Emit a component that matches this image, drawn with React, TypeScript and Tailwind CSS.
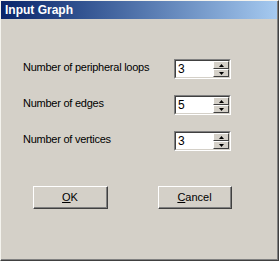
import React from "react";

const font = { fontFamily: '"Liberation Sans", Arial, sans-serif' };

function SpinBtn({ up }: { up: boolean }) {
  return (
    <div className="flex h-[8px] w-[16px] items-center justify-center border-t border-l border-t-white border-l-white border-r border-b border-r-[#404040] border-b-[#404040] bg-[#d4d0c8]">
      <svg width="5" height="3" viewBox="0 0 5 3" className="block">
        {up ? (
          <polygon points="2.5,0 5,3 0,3" fill="#000" />
        ) : (
          <polygon points="0,0 5,0 2.5,3" fill="#000" />
        )}
      </svg>
    </div>
  );
}

function Spin({ value }: { value: string }) {
  return (
    <div className="h-[20px] w-[57px] border-t border-l border-t-[#808080] border-l-[#808080] border-r border-b border-r-white border-b-white">
      <div className="flex h-full w-full border-t border-l border-t-[#404040] border-l-[#404040] border-r border-b border-r-[#d4d0c8] border-b-[#d4d0c8] bg-white">
        <div className="flex flex-1 items-center pl-[2px] text-[12px] leading-none text-black">{value}</div>
        <div className="flex flex-col">
          <SpinBtn up />
          <SpinBtn up={false} />
        </div>
      </div>
    </div>
  );
}

function Btn({ children, w }: { children: React.ReactNode; w: string }) {
  return (
    <div className={`${w} h-[23px] border-t border-l border-t-white border-l-white border-r border-b border-r-[#404040] border-b-[#404040]`}>
      <div className="flex h-full w-full items-center justify-center border-r border-b border-r-[#808080] border-b-[#808080] text-[11px] text-black">
        {children}
      </div>
    </div>
  );
}

export default function App() {
  const rows: [string, string][] = [
    ["Number of peripheral loops", "3"],
    ["Number of edges", "5"],
    ["Number of vertices", "3"],
  ];
  return (
    <div style={font} className="h-[261px] w-[279px] overflow-hidden bg-[#d4d0c8]">
      <div className="flex h-full w-full flex-col border-t border-l border-t-[#f4f3ee] border-l-[#f4f3ee] border-r border-b border-r-[#404040] border-b-[#404040]">
        <div className="flex h-full w-full flex-col border-r border-b border-r-[#808080] border-b-[#808080]">
          <div className="flex h-[18px] items-center bg-gradient-to-r from-[#0a246a] to-[#a6caf0] pl-[4px] text-[12px] font-bold text-white">
            Input Graph
          </div>
          <div className="flex flex-col pt-[40px]">
            <div className="flex flex-col gap-[16px]">
              {rows.map(([label, v]) => (
                <div key={label} className="flex h-[20px] items-center">
                  <div className="w-[173px] pb-[3px] pl-[22px] text-[11px] tracking-[-0.25px] text-black">{label}</div>
                  <Spin value={v} />
                </div>
              ))}
            </div>
            <div className="mt-[35px] flex gap-[50px] pl-[32px]">
              <Btn w="w-[75px]">
                <span>
                  <span className="underline">O</span>K
                </span>
              </Btn>
              <Btn w="w-[74px]">
                <span>
                  <span className="underline">C</span>ancel
                </span>
              </Btn>
            </div>
          </div>
        </div>
      </div>
    </div>
  );
}
